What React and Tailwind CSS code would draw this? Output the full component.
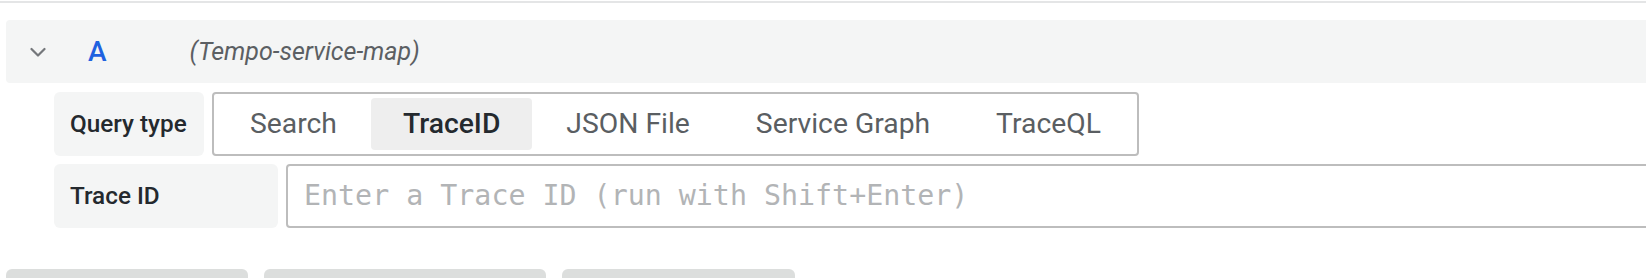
export default function App() {
  const tabs = ["Search", "TraceID", "JSON File", "Service Graph", "TraceQL"];
  return (
    <div className="w-[1646px] h-[278px] overflow-hidden bg-white font-['Roboto',sans-serif]">
      <div className="mt-px h-[2px] bg-[#e4e5e6]" />
      <div className="ml-[6px] mt-[17px] h-[63px] w-[1700px] flex items-center bg-[#f4f5f5] rounded-l-[4px]">
        <svg className="ml-[24px] w-[16px] h-[16px] shrink-0" viewBox="0 0 16 16" fill="none">
          <path d="M1.5 5L8 11.5L14.5 5" stroke="#74777b" strokeWidth="2.2" strokeLinecap="round" strokeLinejoin="round" />
        </svg>
        <span className="ml-[42px] text-[28px] font-medium text-[#1f62e0] leading-none">A</span>
        <span className="ml-[83px] text-[25px] italic text-[#5b5f63] leading-none">(Tempo-service-map)</span>
      </div>
      <div className="ml-[54px] mt-[9px] flex flex-col gap-2">
        <div className="flex gap-2 h-16">
          <div className="w-[150px] shrink-0 h-16 rounded-[6px] bg-[#f4f5f5] px-4 flex items-center text-[24.3px] font-medium text-[#24292e]">
            Query type
          </div>
          <div className="shrink-0 h-16 border-2 border-[#bdbdbd] rounded-[4px] p-[4px] flex gap-[2px]">
            {tabs.map((t) => (
              <div
                key={t}
                className={
                  t === "TraceID"
                    ? "h-[52px] px-8 flex items-center rounded-[4px] bg-[#eeeeee] text-[28.3px] font-medium text-[#24292e]"
                    : "h-[52px] px-8 flex items-center rounded-[4px] text-[28.3px] text-[#5a5e62]"
                }
              >
                {t}
              </div>
            ))}
          </div>
        </div>
        <div className="flex gap-2 h-16">
          <div className="w-[224px] shrink-0 h-16 rounded-[6px] bg-[#f4f5f5] px-4 flex items-center text-[24.3px] font-medium text-[#24292e]">
            Trace ID
          </div>
          <div className="w-[1500px] shrink-0 h-16 border-2 border-[#bdbdbd] rounded-[4px] pl-4 flex items-center font-['DejaVu_Sans_Mono',monospace] text-[28.3px] text-[#b2b4b6]">
            Enter a Trace ID (run with Shift+Enter)
          </div>
        </div>
      </div>
      <div className="ml-[6px] mt-[41px] flex gap-4">
        <div className="w-[242px] h-[20px] rounded-t-[6px] bg-[#dcdedd]" />
        <div className="w-[282px] h-[20px] rounded-t-[6px] bg-[#dcdedd]" />
        <div className="w-[233px] h-[20px] rounded-t-[6px] bg-[#dcdedd]" />
      </div>
    </div>
  );
}
